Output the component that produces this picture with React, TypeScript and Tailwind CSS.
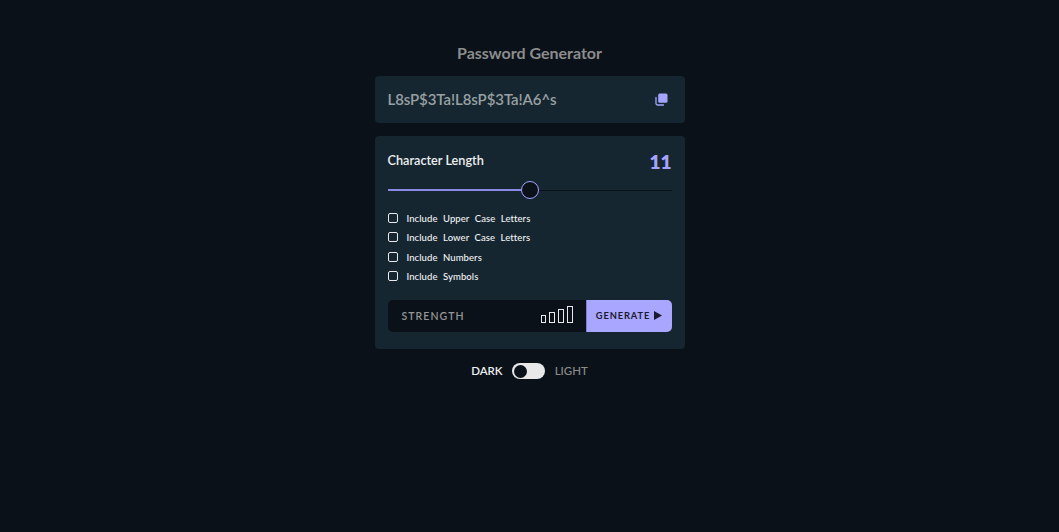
export default function App() {
  const options = [
    "Include Upper Case Letters",
    "Include Lower Case Letters",
    "Include Numbers",
    "Include Symbols",
  ];
  return (
    <div className="min-h-[532px] bg-[#0a1119] flex flex-col items-center font-['Lato','Liberation_Sans',sans-serif]">
      <h1 className="mt-[42px] h-[22px] leading-[22px] text-[16px] font-bold text-[#8c8c8c]">Password Generator</h1>
      <div className="mt-[12px] w-[310px] h-[47px] rounded-[4px] bg-[#162630] flex items-center justify-between pl-[13px] pr-[17px]">
        <span className="text-[15px] font-semibold text-[#98a0a3] tracking-[-0.08px]">L8sP$3Ta!L8sP$3Ta!A6^s</span>
        <svg width="13" height="13" viewBox="0 0 13 13" fill="none">
          <path d="M1 4.5 V10.5 Q1 12 2.5 12 H8.5" stroke="#a4a4ff" strokeWidth="1.3" strokeLinecap="round" fill="none" />
          <rect x="3.2" y="0.5" width="9.3" height="9.3" rx="1.5" fill="#a4a4ff" />
        </svg>
      </div>
      <div className="mt-[13px] w-[310px] h-[213px] rounded-[4px] bg-[#162630] px-[13px] flex flex-col">
        <div className="mt-[13px] h-[24px] flex items-center justify-between">
          <span className="text-[12.7px] font-semibold text-[#eef0f2]">Character Length</span>
          <span className="text-[19px] font-extrabold text-[#a4a4ff] leading-[23px]">11</span>
        </div>
        <div className="mt-[7px] h-[20px] flex items-center">
          <div className="w-[133px] h-[2px] bg-[#8a8ae6]" />
          <div className="w-[18px] h-[18px] shrink-0 rounded-full bg-[#0a1119] border border-[#a4a4ff]" />
          <div className="flex-1 h-[1px] bg-[#0a1119]" />
        </div>
        <div className="mt-[11px] flex flex-col gap-[5.5px]">
          {options.map((o) => (
            <label key={o} className="h-[14px] flex items-center gap-[9px]">
              <span className="w-[10px] h-[10px] -mt-[1px] rounded-[2px] border border-[#e8eaee] shrink-0" />
              <span className="text-[9.5px] font-medium leading-[14px] text-[#f2f4f6] [word-spacing:3px] tracking-[0.08px] mt-[1px]">{o}</span>
            </label>
          ))}
        </div>
        <div className="mt-[16px] h-[32px] flex">
          <div className="flex-1 rounded-l-[5px] bg-[#0a1119] flex items-center justify-between pl-[14px] pr-[13px]">
            <span className="mt-[2px] text-[10.5px] font-semibold tracking-[1.05px] text-[#969696]">STRENGTH</span>
            <div className="-mt-[3px] flex items-end gap-[3px]">
              <span className="w-[5px] h-[8px] border border-[#e8eaee]" />
              <span className="w-[6px] h-[11px] border border-[#e8eaee]" />
              <span className="w-[6px] h-[14px] border border-[#e8eaee]" />
              <span className="w-[6px] h-[17px] border border-[#e8eaee]" />
            </div>
          </div>
          <button className="w-[86px] rounded-r-[5px] bg-[#a8a6ff] flex items-center justify-center gap-[4px] border-l border-[#7f7bd0]">
            <span className="text-[9.3px] font-bold tracking-[0.9px] text-[#1a1a30]">GENERATE</span>
            <svg width="8" height="9" viewBox="0 0 8 9"><path d="M0 0 L8 4.5 L0 9 Z" fill="#1a1a30" /></svg>
          </button>
        </div>
      </div>
      <div className="mt-[13px] h-[18px] flex items-center">
        <span className="text-[11.5px] font-semibold text-[#eef0f2]">DARK</span>
        <div className="ml-[9px] w-[33px] h-[16px] rounded-full bg-[#e8e8e8] flex items-center pl-[2px]">
          <span className="w-[13px] h-[13px] rounded-full bg-[#0a1119]" />
        </div>
        <span className="ml-[10px] text-[11.5px] font-medium text-[#8c8c8c]">LIGHT</span>
      </div>
    </div>
  );
}
